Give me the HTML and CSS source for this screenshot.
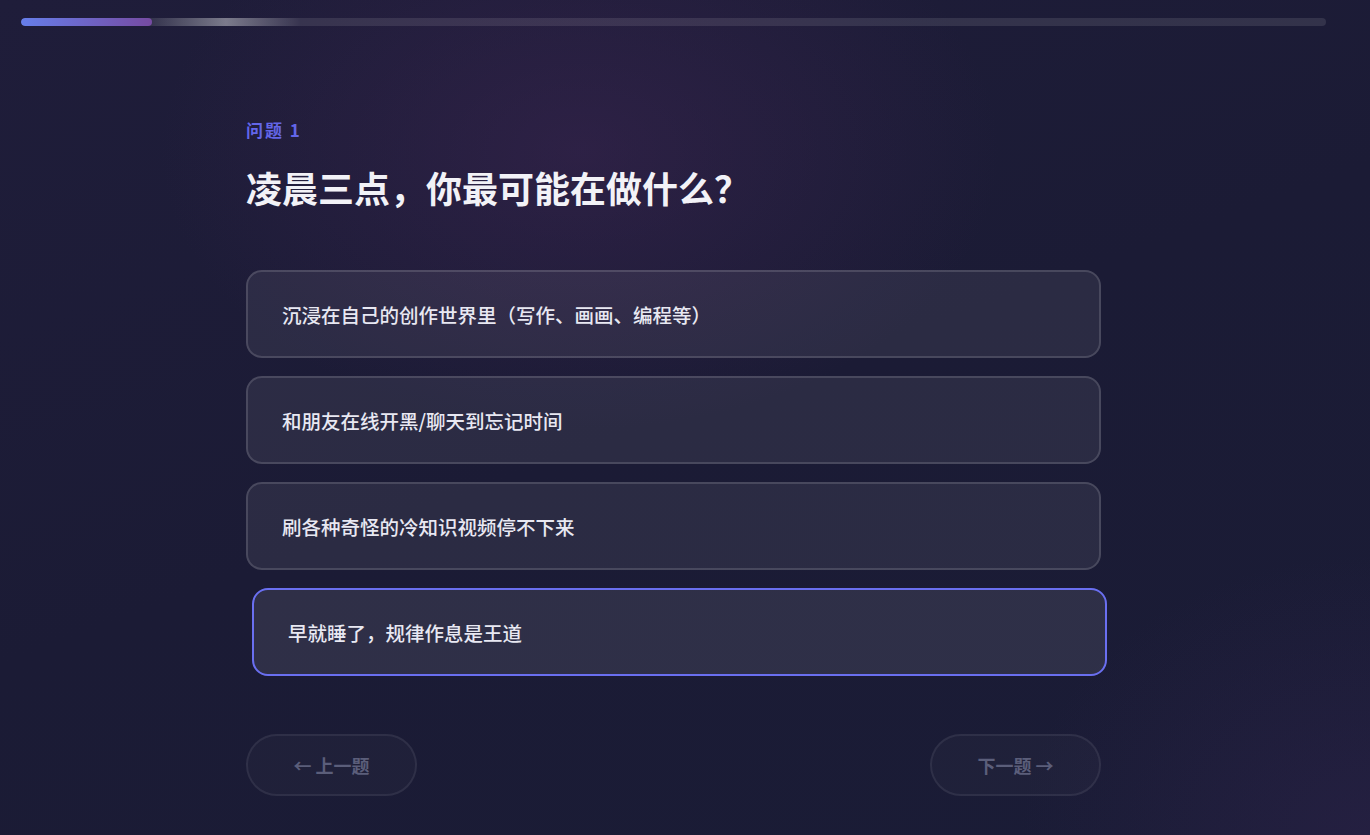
FILE: index.html
```html
<!DOCTYPE html>
<html lang="zh-CN">
<head>
    <meta charset="UTF-8">
    <meta name="viewport" content="width=device-width, initial-scale=1.0">
    <title>深夜人格测试</title>
    <link rel="stylesheet" href="styles.css">
</head>
<body>
    <div class="progress">
        <div class="progress-fill" style="width: 10%;"></div>
        <div class="progress-shine"></div>
    </div>

    <div class="quiz">
        <div class="question-num">问题 1</div>
        <h1 class="question-title">凌晨三点，你最可能在做什么？</h1>

        <div class="options">
            <div class="option">沉浸在自己的创作世界里（写作、画画、编程等）</div>
            <div class="option">和朋友在线开黑/聊天到忘记时间</div>
            <div class="option">刷各种奇怪的冷知识视频停不下来</div>
            <div class="option selected">早就睡了，规律作息是王道</div>
        </div>

        <div class="nav-buttons">
            <button class="nav-button" disabled>← 上一题</button>
            <button class="nav-button" disabled>下一题 →</button>
        </div>
    </div>
</body>
</html>
```

FILE: styles.css
```css
/* General Styles */
body {
    margin: 0;
    padding: 0;
    min-height: 835px;
    font-family: 'Noto Sans CJK SC', 'Noto Sans', sans-serif;
    color: #eeeef5;
    background:
        radial-gradient(ellipse 600px 400px at 580px 150px, rgba(70, 40, 90, 0.4), transparent 70%),
        radial-gradient(ellipse 500px 400px at 1370px 835px, rgba(60, 40, 90, 0.3), transparent 70%),
        linear-gradient(160deg, #1f1d3a 0%, #1b1b35 50%, #1a1c36 100%);
    overflow: hidden;
}

/* Progress Bar */
.progress {
    position: relative;
    margin: 18px 44px 0 21px;
    height: 8px;
    border-radius: 4px;
    background: rgba(255, 255, 255, 0.1);
    overflow: hidden;
}

.progress-fill {
    height: 100%;
    border-radius: 4px;
    background: linear-gradient(90deg, #667eea, #764ba2);
}

.progress-shine {
    position: absolute;
    top: 0;
    left: 130px;
    width: 150px;
    height: 100%;
    background: linear-gradient(90deg, transparent, rgba(255, 255, 255, 0.35), transparent);
}

/* Question */
.quiz {
    width: 855px;
    margin: 0 0 0 246px;
    padding-top: 92px;
}

.question-num {
    font-size: 17px;
    font-weight: 700;
    color: #6366e8;
    letter-spacing: 2px;
    line-height: 24px;
}

.question-title {
    margin: 20px 0 0;
    font-size: 36px;
    font-weight: 700;
    line-height: 50px;
    color: #f2f2f7;
}

/* Options */
.options {
    display: flex;
    flex-direction: column;
    gap: 18px;
    margin-top: 58px;
}

.option {
    box-sizing: border-box;
    height: 88px;
    display: flex;
    align-items: center;
    padding: 0 34px;
    font-size: 19.5px;
    font-weight: 500;
    color: #e8e8f2;
    border: 2px solid rgba(255, 255, 255, 0.14);
    border-radius: 16px;
    background: rgba(255, 255, 255, 0.07);
    cursor: pointer;
}

.option.selected {
    border-color: #6a6ff0;
    transform: translateX(6px);
    background: rgba(255, 255, 255, 0.09);
}

/* Navigation */
.nav-buttons {
    display: flex;
    justify-content: space-between;
    margin-top: 58px;
}

.nav-button {
    width: 171px;
    height: 62px;
    font-family: inherit;
    font-size: 18px;
    font-weight: 700;
    color: #5b5e7a;
    border: 2px solid rgba(255, 255, 255, 0.07);
    border-radius: 31px;
    background: rgba(255, 255, 255, 0.025);
}
```
